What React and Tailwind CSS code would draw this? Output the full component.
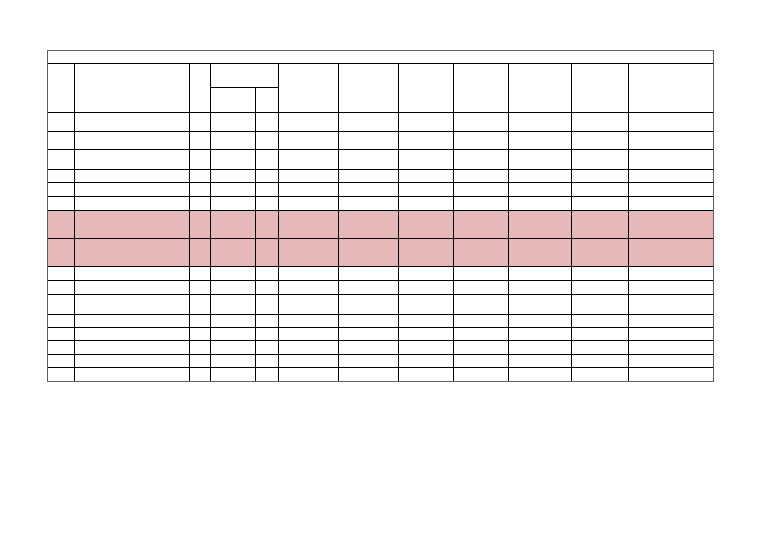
import React from 'react';

// empty worksheet grid: 12 columns, two-line header, 16 body rows
const rowHeights = [18, 17, 19, 12, 13, 13, 27, 27, 13, 13, 19, 12, 12, 13, 12, 13];
const highlighted = [6, 7];
const columns = 12;

const App = () => {
  return (
    <div className="min-h-[543px] bg-white pt-[50px] pl-[47px]">
      <div className="w-[667px] border border-[#606060]">
        <div className="grid gap-px bg-black grid-cols-[26px_114px_20px_44px_22px_59px_59px_54px_54px_62px_56px_84px] grid-rows-[12px_23px_24px_18px_17px_19px_12px_13px_13px_27px_27px_13px_13px_19px_12px_12px_13px_12px_13px]">
          {/* Title row */}
          <div className="col-span-12 bg-white"></div>

          {/* Header */}
          <div className="row-span-2 bg-white"></div>
          <div className="row-span-2 bg-white"></div>
          <div className="row-span-2 bg-white"></div>
          <div className="col-span-2 bg-white"></div>
          <div className="row-span-2 bg-white"></div>
          <div className="row-span-2 bg-white"></div>
          <div className="row-span-2 bg-white"></div>
          <div className="row-span-2 bg-white"></div>
          <div className="row-span-2 bg-white"></div>
          <div className="row-span-2 bg-white"></div>
          <div className="row-span-2 bg-white"></div>
          <div className="bg-white"></div>
          <div className="bg-white"></div>

          {/* Body */}
          {rowHeights.map((h, r) =>
            Array.from({ length: columns }).map((_, c) => (
              <div
                key={`${r}-${c}`}
                className={highlighted.includes(r) ? 'bg-[#e6b8b7]' : 'bg-white'}
              ></div>
            ))
          )}
        </div>
      </div>
    </div>
  );
};

export default App;
